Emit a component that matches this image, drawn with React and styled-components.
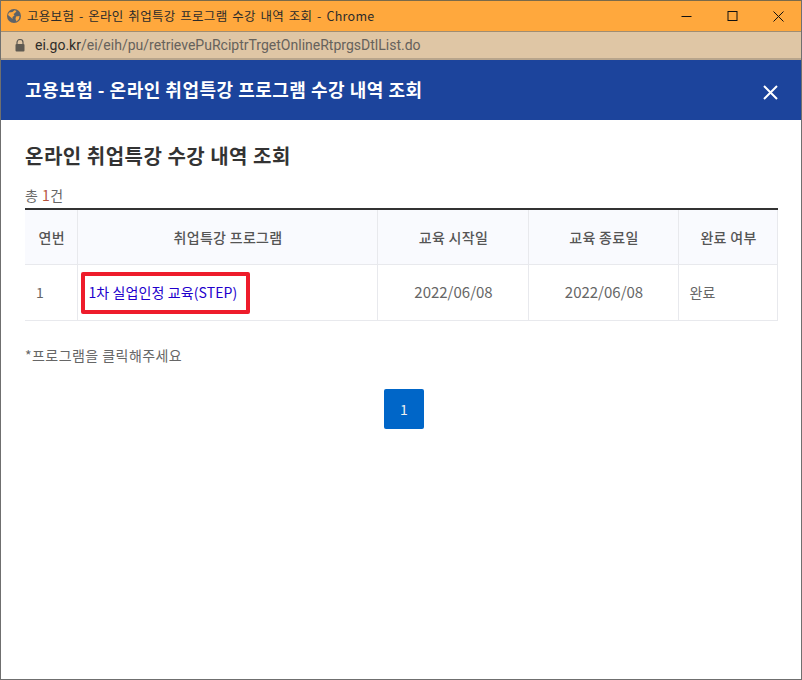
import React from "react";
import styled, { createGlobalStyle } from "styled-components";

const rows = [
  { no: "1", title: "1차 실업인정 교육(STEP)", start: "2022/06/08", end: "2022/06/08", done: "완료" },
];

export default function App() {
  return (
    <Win>
      <GlobalStyle />
      <TitleBar>
        <TitleLeft>
          <svg width="14" height="14" viewBox="0 0 14 14">
            <circle cx="7" cy="7" r="7" fill="#5f6368" />
            <path d="M2 3.5 L5.5 3 L7.5 1.2 L9.5 2 L8 4 L6.5 5 L7.5 6.5 L5.5 8 L5.5 10 L4 8.5 L1 6 Z M9 7.5 L12.5 7 L12 10 L9.5 12.5 L8.5 10 Z" fill="#ffa83d" />
          </svg>
          <TitleText>고용보험 - 온라인 취업특강 프로그램 수강 내역 조회 - Chrome</TitleText>
        </TitleLeft>
        <WinButtons>
          <WinBtn>
            <svg width="11" height="11" viewBox="0 0 11 11"><path d="M0.5 5.5H10.5" stroke="#111" strokeWidth="1" /></svg>
          </WinBtn>
          <WinBtn>
            <svg width="11" height="11" viewBox="0 0 11 11"><rect x="1" y="0.5" width="9" height="9" fill="none" stroke="#111" strokeWidth="1" /></svg>
          </WinBtn>
          <WinBtn>
            <svg width="11" height="11" viewBox="0 0 11 11"><path d="M0.5 0.5L10.5 10.5M10.5 0.5L0.5 10.5" stroke="#111" strokeWidth="1" /></svg>
          </WinBtn>
        </WinButtons>
      </TitleBar>
      <AddressBar>
        <svg width="10" height="13" viewBox="0 0 10 13">
          <path d="M2 5V3.5a3 3 0 0 1 6 0V5" fill="none" stroke="#5f5a52" strokeWidth="1.2" />
          <rect x="0.5" y="5" width="9" height="7.5" rx="1" fill="#5f5a52" />
        </svg>
        <Url>
          <b>ei.go.kr</b>/ei/eih/pu/retrievePuRciptrTrgetOnlineRtprgsDtlList.do
        </Url>
      </AddressBar>
      <Header>
        <HeaderTitle>고용보험 - 온라인 취업특강 프로그램 수강 내역 조회</HeaderTitle>
        <CloseBtn>
          <svg width="15" height="15" viewBox="0 0 15 15"><path d="M1 1L14 14M14 1L1 14" stroke="#fff" strokeWidth="2" /></svg>
        </CloseBtn>
      </Header>
      <Body>
        <Heading>온라인 취업특강 수강 내역 조회</Heading>
        <Count>총 <em>1</em>건</Count>
        <Table>
          <colgroup>
            <col width="52" />
            <col width="300" />
            <col width="151" />
            <col width="150" />
            <col width="99" />
          </colgroup>
          <thead>
            <tr>
              <Th>연번</Th>
              <Th>취업특강 프로그램</Th>
              <Th>교육 시작일</Th>
              <Th>교육 종료일</Th>
              <Th>완료 여부</Th>
            </tr>
          </thead>
          <tbody>
            {rows.map((row) => (
              <tr key={row.no}>
                <Td $left>{row.no}</Td>
                <LinkCell $left>
                  <Highlight>
                    <ProgramLink href="#">{row.title}</ProgramLink>
                  </Highlight>
                </LinkCell>
                <DateCell>{row.start}</DateCell>
                <DateCell>{row.end}</DateCell>
                <Td $left>{row.done}</Td>
              </tr>
            ))}
          </tbody>
        </Table>
        <Note>*프로그램을 클릭해주세요</Note>
        <Pager>
          <PageBtn>1</PageBtn>
        </Pager>
      </Body>
    </Win>
  );
}

const GlobalStyle = createGlobalStyle`
  html, body {
    margin: 0;
    padding: 0;
    background: #fff;
  }
  body {
    font-family: "Noto Sans CJK KR", "Noto Sans", sans-serif;
  }
`;

const Win = styled.div`
  width: 802px;
  height: 680px;
  box-sizing: border-box;
  border-left: 1px solid #6f6f6f;
  border-right: 1px solid #6f6f6f;
  border-bottom: 1px solid #6f6f6f;
  display: flex;
  flex-direction: column;
  overflow: hidden;
  background: #fff;
`;

const TitleBar = styled.div`
  height: 31px;
  box-sizing: border-box;
  border-top: 1px solid #7a6a4a;
  background: #ffa83d;
  display: flex;
  align-items: center;
  justify-content: space-between;
  padding-left: 6px;
`;

const TitleLeft = styled.div`
  display: flex;
  align-items: center;
  gap: 6px;
`;

const TitleText = styled.span`
  font-size: 12.5px;
  line-height: 14px;
  margin-top: -1px;
  letter-spacing: 0.3px;
  word-spacing: 1.6px;
  color: #2b2b2b;
`;

const WinButtons = styled.div`
  display: flex;
`;

const WinBtn = styled.div`
  width: 46px;
  height: 30px;
  display: flex;
  align-items: center;
  justify-content: center;
`;

const AddressBar = styled.div`
  height: 29px;
  box-sizing: border-box;
  background: #dfc6a5;
  border-top: 1px solid #a08d72;
  border-bottom: 2px solid #b8a58c;
  display: flex;
  align-items: center;
  gap: 10px;
  padding-left: 14px;
`;

const Url = styled.span`
  font-family: "Roboto", "Liberation Sans", sans-serif;
  font-size: 14.03px;
  color: #66625c;
  b {
    font-weight: 400;
    color: #2e2c29;
  }
`;

const Header = styled.header`
  height: 60px;
  flex-shrink: 0;
  background: #1c449c;
  display: flex;
  align-items: center;
  justify-content: space-between;
  padding: 0 23px 0 24px;
`;

const HeaderTitle = styled.h1`
  margin: -2px 0 0;
  font-size: 18px;
  font-weight: 700;
  letter-spacing: 0.5px;
  color: #fff;
`;

const CloseBtn = styled.div`
  display: flex;
  margin-top: 4px;
`;

const Body = styled.main`
  padding: 22px 24px 0;
`;

const Heading = styled.h2`
  margin: 0;
  font-size: 20px;
  line-height: 28px;
  font-weight: 700;
  letter-spacing: 0.5px;
  color: #333;
`;

const Count = styled.div`
  margin-top: 15px;
  font-size: 14px;
  line-height: 20px;
  letter-spacing: 0.5px;
  color: #666;
  em {
    font-style: normal;
    color: #b5533c;
  }
`;

const Table = styled.table`
  margin-top: 3px;
  width: 752px;
  table-layout: fixed;
  border-collapse: collapse;
  border-top: 2px solid #333;
`;

const Th = styled.th`
  height: 54px;
  padding: 0 0 0 2px;
  background: #f9fafe;
  border: 1px solid #e8e9ed;
  border-top: none;
  font-size: 14px;
  font-weight: 500;
  letter-spacing: 0.3px;
  color: #555;
  &:first-child {
    border-left: none;
  }
`;

const Td = styled.td`
  height: 56px;
  box-sizing: border-box;
  padding: 0 ${(p) => (p.$left ? "11px" : "0")} 2px;
  border: 1px solid #e8e9ed;
  font-size: 14px;
  color: #666;
  text-align: ${(p) => (p.$left ? "left" : "center")};
  &:first-child {
    border-left: none;
  }
`;

const LinkCell = styled(Td)`
  padding-bottom: 0;
`;

const DateCell = styled(Td)`
  padding-left: 2px;
  font-size: 15px;
`;

const Highlight = styled.span`
  display: block;
  box-sizing: border-box;
  width: 169px;
  height: 42px;
  margin-left: -8px;
  padding-left: 4px;
  line-height: 32px;
  white-space: nowrap;
  border: 4px solid #ee1c2b;
  border-radius: 2px;
`;

const ProgramLink = styled.a`
  color: #2200cc;
  text-decoration: none;
  letter-spacing: 0.1px;
`;

const Note = styled.p`
  margin: 24px 0 0;
  font-size: 14px;
  line-height: 20px;
  letter-spacing: 0.45px;
  color: #666;
`;

const Pager = styled.div`
  margin-top: 24px;
  padding-left: 6px;
  display: flex;
  justify-content: center;
`;

const PageBtn = styled.div`
  width: 40px;
  height: 40px;
  border-radius: 2px;
  background: #0066c8;
  color: #f0f0f0;
  font-size: 14px;
  display: flex;
  align-items: center;
  justify-content: center;
`;
